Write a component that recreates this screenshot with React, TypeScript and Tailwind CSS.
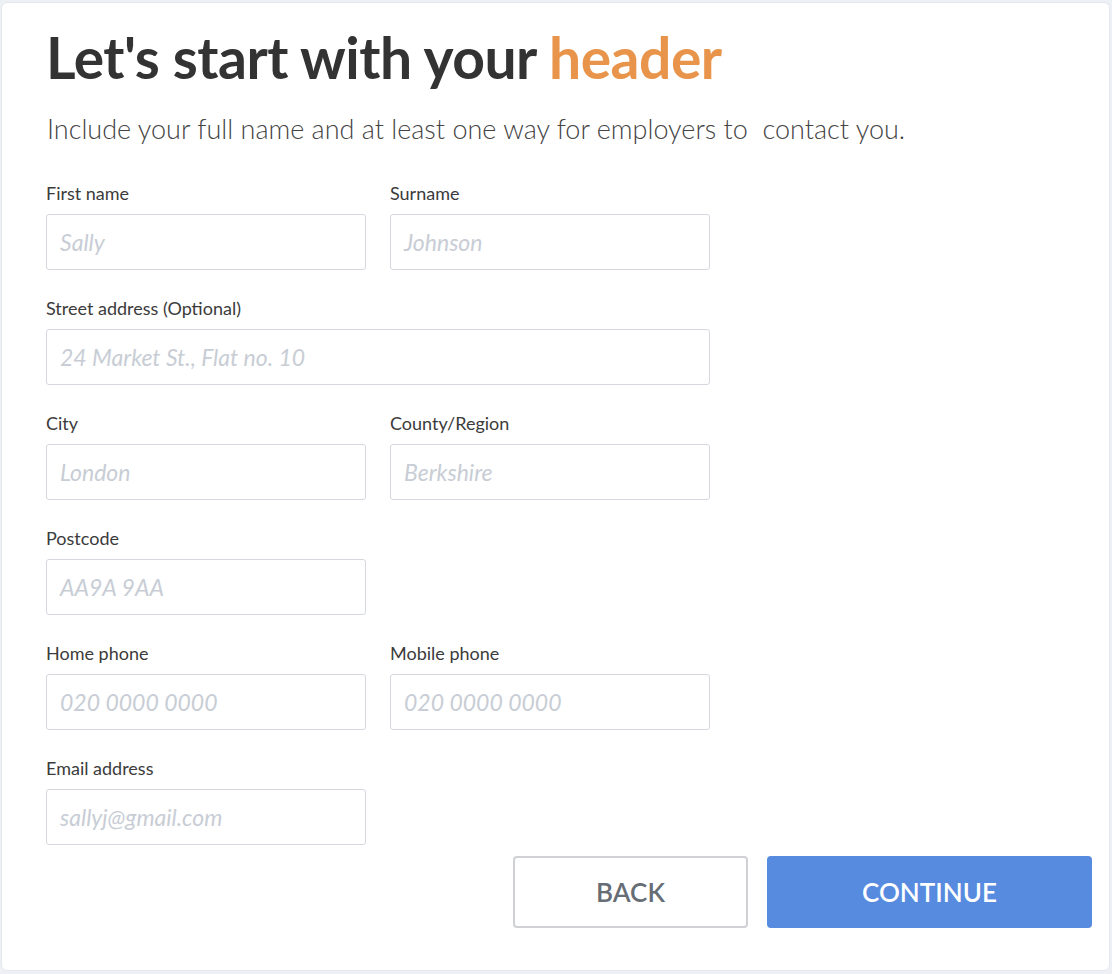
import React from "react";

const font = { fontFamily: "Lato, 'Noto Sans', sans-serif" };

function Field({ label, placeholder, wide }: { label: string; placeholder: string; wide?: boolean }) {
  return (
    <div className={wide ? "w-[664px]" : "w-[320px]"}>
      <div className="text-[18px] leading-[22px] text-[#3b3b3b] h-[22px]">{label}</div>
      <div className="mt-[10px] h-[56px] rounded-[3px] border border-[#d4d8de] flex items-center pl-[13px]">
        <span className="italic text-[23px] text-[#c8cdd5]">{placeholder}</span>
      </div>
    </div>
  );
}

export default function App() {
  return (
    <div className="w-[1112px] h-[974px] bg-[#edf0f4] pt-[2px] pl-[1px] pr-[2px] pb-[3px]" style={font}>
      <div className="h-full bg-white rounded-[6px] border border-[#e4e8ed] pl-[44px] pr-[17px] pt-[22px]">
        <h1 className="text-[57px] leading-[64px] font-bold text-[#333333] tracking-[-0.5px]">
          Let's start with your <span className="text-[#e8944a]">header</span>
        </h1>
        <p className="mt-[24px] pl-[1px] text-[27px] leading-[32px] font-light text-[#444]">
          Include your full name and at least one way for employers to&nbsp; contact you.
        </p>
        <div className="mt-[37px] flex flex-col gap-[27px]">
          <div className="flex gap-[24px]">
            <Field label="First name" placeholder="Sally" />
            <Field label="Surname" placeholder="Johnson" />
          </div>
          <Field label="Street address (Optional)" placeholder="24 Market St., Flat no. 10" wide />
          <div className="flex gap-[24px]">
            <Field label="City" placeholder="London" />
            <Field label="County/Region" placeholder="Berkshire" />
          </div>
          <Field label="Postcode" placeholder="AA9A 9AA" />
          <div className="flex gap-[24px]">
            <Field label="Home phone" placeholder="020 0000 0000" />
            <Field label="Mobile phone" placeholder="020 0000 0000" />
          </div>
          <Field label="Email address" placeholder="sallyj@gmail.com" />
        </div>
        <div className="mt-[11px] flex justify-end gap-[19px]">
          <button className="w-[235px] h-[72px] rounded-[4px] border-2 border-[#cfd1d4] bg-white text-[26px] font-semibold text-[#676d75]">
            BACK
          </button>
          <button className="w-[325px] h-[72px] rounded-[4px] bg-[#568be0] text-[26px] font-semibold text-white">
            CONTINUE
          </button>
        </div>
      </div>
    </div>
  );
}
